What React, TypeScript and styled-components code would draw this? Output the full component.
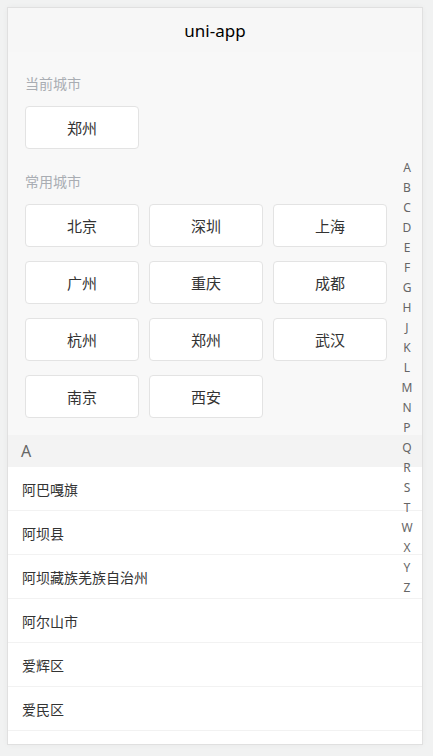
import styled, { createGlobalStyle } from "styled-components";

const GlobalStyle = createGlobalStyle`
    html, body {
        margin: 0;
        padding: 0;
        background: #f1f2f2;
        font-family: "Noto Sans", "Noto Sans CJK SC", sans-serif;
    }
`;

const Frame = styled.div`
    position: relative;
    margin: 7px;
    width: 416px;
    height: 738px;
    box-sizing: border-box;
    border: 1px solid #e0e0e0;
    background: #f8f8f8;
    overflow: hidden;
    display: flex;
    flex-direction: column;
    box-shadow: 0 0 6px rgba(0, 0, 0, 0.04);
`;

const NavBar = styled.div`
    height: 44px;
    flex-shrink: 0;
    display: flex;
    justify-content: center;
    align-items: center;
    background: #f7f7f7;
    font-size: 17px;
    color: #000;
`;

const Content = styled.div`
    flex: 1;
    display: flex;
    flex-direction: column;
    overflow: hidden;
`;

const HotArea = styled.div`
    padding: 20px 35px 17px 17px;
`;

const Label = styled.div<{ first?: boolean }>`
    line-height: 24px;
    font-size: 14px;
    color: #a9adb3;
    margin-top: ${(props) => (props.first ? "0" : "21px")};
    margin-bottom: 10px;
`;

const CityGrid = styled.div`
    display: grid;
    grid-template-columns: repeat(3, 114px);
    column-gap: 10px;
    row-gap: 14px;
`;

const CityButton = styled.div`
    height: 43px;
    box-sizing: border-box;
    border: 1px solid #e3e3e3;
    border-radius: 4px;
    background: #fff;
    display: flex;
    justify-content: center;
    align-items: center;
    font-size: 15px;
    color: #333;
`;

const GroupTitle = styled.div`
    height: 32px;
    flex-shrink: 0;
    display: flex;
    align-items: center;
    padding-left: 13px;
    background: #f3f3f3;
    font-size: 16px;
    color: #666;
`;

const CityList = styled.div`
    flex: 1;
    background: #fff;
`;

const CityItem = styled.div`
    height: 43px;
    display: flex;
    align-items: center;
    padding-left: 14px;
    border-bottom: 1px solid #f2f2f2;
    font-size: 14px;
    color: #333;
`;

const IndexBar = styled.div`
    position: absolute;
    top: 150px;
    right: 0;
    width: 30px;
    display: flex;
    flex-direction: column;
    align-items: center;
`;

const IndexLetter = styled.div`
    height: 20px;
    line-height: 20px;
    font-size: 12px;
    color: #666;
`;

const hotCities = ["北京", "深圳", "上海", "广州", "重庆", "成都", "杭州", "郑州", "武汉", "南京", "西安"];
const aCities = ["阿巴嘎旗", "阿坝县", "阿坝藏族羌族自治州", "阿尔山市", "爱辉区", "爱民区"];
const letters = "ABCDEFGHJKLMNPQRSTWXYZ".split("");

function App() {
    return (
        <>
            <GlobalStyle />
            <Frame>
                <NavBar>uni-app</NavBar>
                <Content>
                    <HotArea>
                        <Label first>当前城市</Label>
                        <CityGrid>
                            <CityButton>郑州</CityButton>
                        </CityGrid>
                        <Label>常用城市</Label>
                        <CityGrid>
                            {hotCities.map((city) => (
                                <CityButton key={city}>{city}</CityButton>
                            ))}
                        </CityGrid>
                    </HotArea>
                    <GroupTitle>A</GroupTitle>
                    <CityList>
                        {aCities.map((city) => (
                            <CityItem key={city}>{city}</CityItem>
                        ))}
                    </CityList>
                </Content>
                <IndexBar>
                    {letters.map((l) => (
                        <IndexLetter key={l}>{l}</IndexLetter>
                    ))}
                </IndexBar>
            </Frame>
        </>
    );
}

export default App;
